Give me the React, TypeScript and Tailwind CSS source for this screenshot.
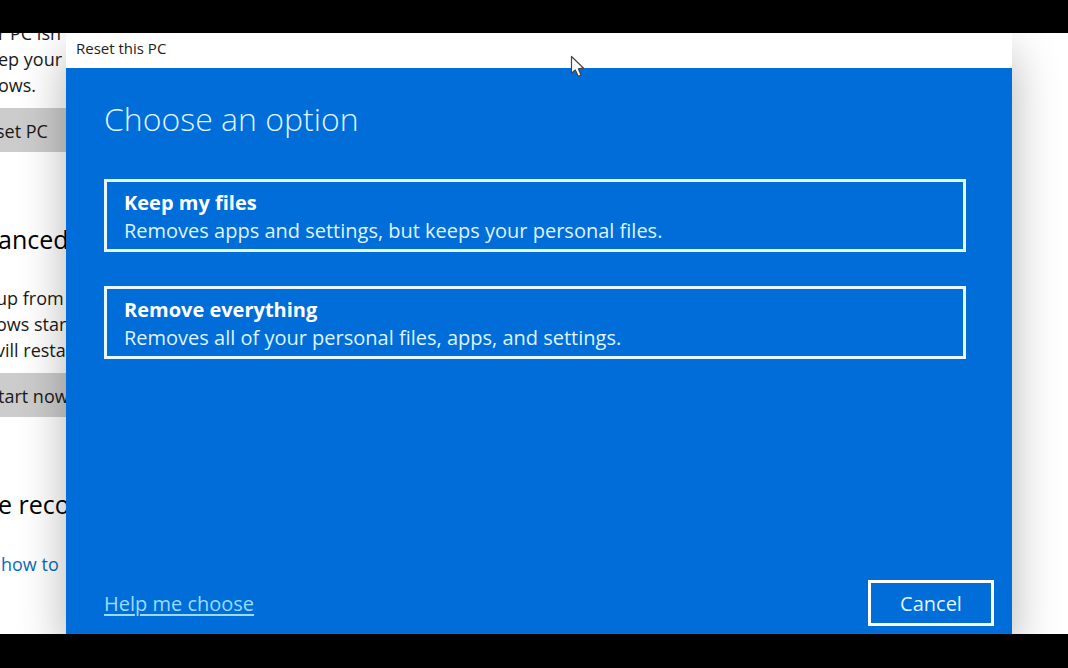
interface ResetOption {
  title: string;
  description: string;
}

const options: ResetOption[] = [
  {
    title: "Keep my files",
    description: "Removes apps and settings, but keeps your personal files."
  },
  {
    title: "Remove everything",
    description: "Removes all of your personal files, apps, and settings."
  }
];

const Cursor = () => (
  <svg
    className="absolute top-[22px] left-[504px] w-[16px] h-[24px]"
    viewBox="0 0 16 24"
    aria-hidden="true"
  >
    <path
      d="M1.5 1.5 L1.5 18.2 L5.3 14.9 L8.3 21.2 L11 20 L8.3 13.8 L13.6 13.2 Z"
      fill="#fff"
      stroke="#444"
      strokeWidth="1.2"
      strokeLinejoin="round"
    />
  </svg>
);

const SettingsPage = () => (
  <div className="w-[66px] shrink-0 overflow-hidden whitespace-nowrap text-[18px] leading-[26px] text-[#1a1a1a]">
    <div className="-mt-[13px] -ml-[2px]">
      <p>r PC isn't</p>
      <p>ep your p</p>
      <p>ows.</p>
    </div>
    <button className="mt-[10px] -ml-1 block h-[44px] w-[120px] bg-[#cccccc] pt-[2px] text-left">set PC</button>

    <h2 className="mt-[71px] -ml-[2px] text-[25px] leading-[32px] text-black">anced</h2>
    <div className="mt-[30px] -ml-1">
      <p>up from</p>
      <p>ows startup</p>
      <p>vill restart</p>
    </div>
    <button className="mt-[10px] -ml-[2px] block h-[44px] w-[120px] bg-[#cccccc] pt-[2px] text-left">tart now</button>

    <h2 className="mt-[71px] -ml-[2px] text-[25px] leading-[32px] text-black">e recovery</h2>
    <a href="#" className="mt-[31px] ml-px block text-[#0a6cbd]">how to</a>
  </div>
);

const ResetDialog = () => (
  <section className="relative flex flex-1 flex-col bg-[#006dd9] shadow-[0_20px_44px_rgba(0,0,0,0.3)]">
    <header className="flex h-[35px] items-center bg-white px-[10px] pb-1 text-[15px] text-[#222]">
      Reset this PC
    </header>
    <Cursor />

    <div className="flex flex-1 flex-col pl-[38px] pr-[18px] pb-2 text-[#dff5ff]">
      <h1 className="mt-[29px] text-[32px] leading-[44px] font-light">Choose an option</h1>
      <div className="mt-[38px] mr-7 flex flex-col gap-[34px]">
        {options.map((option) => (
          <button
            key={option.title}
            className="h-[73px] border-[3px] border-[#e6f7ff] px-[17px] pt-[2px] text-left text-[20px] leading-[28px]"
          >
            <span className="block font-bold text-white">{option.title}</span>
            <span className="block">{option.description}</span>
          </button>
        ))}
      </div>

      <footer className="mt-auto flex items-center justify-between text-[20px]">
        <a href="#" className="pt-[2px] text-[#99dcff] underline underline-offset-3">Help me choose</a>
        <button className="h-[46px] w-[126px] border-[3px] border-white pt-[2px]">Cancel</button>
      </footer>
    </div>
  </section>
);

const App = () => {
  return (
    <div className="flex min-h-screen flex-col bg-black font-['Open_Sans','Noto_Sans',sans-serif]">
      <div className="h-[33px] shrink-0" />
      <main className="flex flex-1 overflow-hidden bg-white">
        <SettingsPage />
        <ResetDialog />
        <div className="w-[56px] shrink-0" />
      </main>
      <div className="h-[34px] shrink-0" />
    </div>
  );
};

export default App;
